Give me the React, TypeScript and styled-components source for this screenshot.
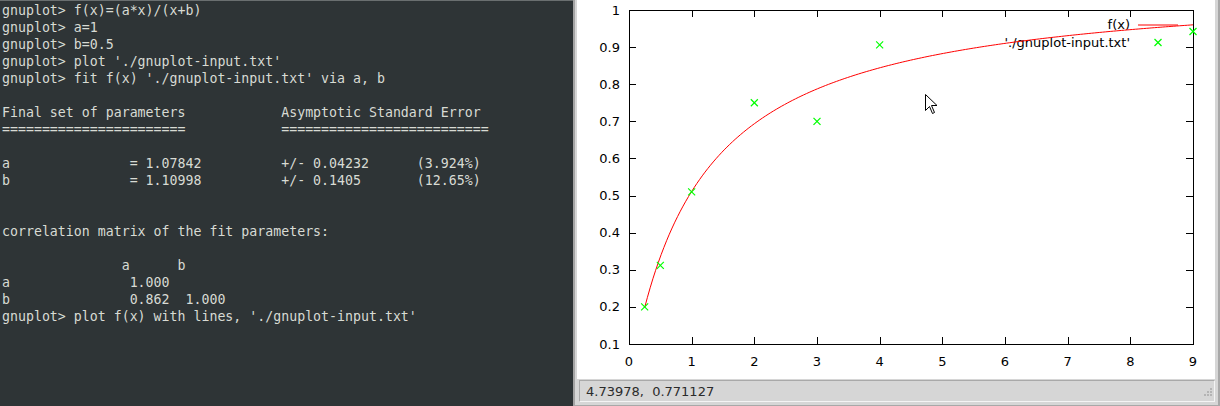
import React from 'react';
import styled, { createGlobalStyle } from 'styled-components';

const GlobalStyle = createGlobalStyle`
  html, body {
    margin: 0;
    padding: 0;
    overflow: hidden;
    background: #d6d6d6;
  }
`;

const terminalText = `gnuplot> f(x)=(a*x)/(x+b)
gnuplot> a=1
gnuplot> b=0.5
gnuplot> plot './gnuplot-input.txt'
gnuplot> fit f(x) './gnuplot-input.txt' via a, b

Final set of parameters            Asymptotic Standard Error
=======================            ==========================

a               = 1.07842          +/- 0.04232      (3.924%)
b               = 1.10998          +/- 0.1405       (12.65%)


correlation matrix of the fit parameters:

               a      b
a               1.000
b               0.862  1.000
gnuplot> plot f(x) with lines, './gnuplot-input.txt'`;

// plot geometry, in canvas coordinates
const W = 638;
const H = 379;
const X0 = 52;
const X1 = 616;
const Y0 = 344;
const Y1 = 10;
const xMin = 0;
const xMax = 9;
const yMin = 0.1;
const yMax = 1;

const px = (x: number) => X0 + ((x - xMin) / (xMax - xMin)) * (X1 - X0);
const py = (y: number) => Y0 - ((y - yMin) / (yMax - yMin)) * (Y0 - Y1);

const data: [number, number][] = [
  [0.25, 0.2],
  [0.5, 0.312],
  [1, 0.51],
  [2, 0.75],
  [3, 0.7],
  [4, 0.906],
  [9, 0.942],
];

const a = 1.07842;
const b = 1.10998;
const f = (x: number) => (a * x) / (x + b);

const curve = (() => {
  const pts: string[] = [];
  for (let i = 0; i <= 200; i++) {
    const x = 0.25 + ((9 - 0.25) * i) / 200;
    pts.push(`${px(x).toFixed(2)},${py(f(x)).toFixed(2)}`);
  }
  return 'M' + pts.join(' L');
})();

const xTicks = [0, 1, 2, 3, 4, 5, 6, 7, 8, 9];
const yTicks = [0.1, 0.2, 0.3, 0.4, 0.5, 0.6, 0.7, 0.8, 0.9, 1];
const TICK = 7;

const Cross: React.FC<{ x: number; y: number }> = ({ x, y }) => (
  <g stroke="#00ff00" strokeWidth={1.2}>
    <line x1={x - 3.5} y1={y - 3.5} x2={x + 3.5} y2={y + 3.5} />
    <line x1={x - 3.5} y1={y + 3.5} x2={x + 3.5} y2={y - 3.5} />
  </g>
);

const Plot: React.FC = () => (
  <svg width={W} height={H} viewBox={`0 0 ${W} ${H}`}>
    <g fill="#000" fontFamily="'DejaVu Sans', sans-serif" fontSize="13">
      {yTicks.map((t) => (
        <text key={t} x={X0 - 9} y={py(t) + 4.5} textAnchor="end">
          {t === 1 ? '1' : t.toFixed(1)}
        </text>
      ))}
      {xTicks.map((t) => (
        <text key={t} x={px(t)} y={Y0 + 22} textAnchor="middle">
          {t}
        </text>
      ))}
      <text x={553} y={29} textAnchor="end">f(x)</text>
      <text x={553} y={47} textAnchor="end">'./gnuplot-input.txt'</text>
    </g>
    <g stroke="#000" strokeWidth={1} shapeRendering="crispEdges">
      {yTicks.slice(1, -1).map((t) => (
        <g key={t}>
          <line x1={X0} y1={Math.round(py(t)) + 0.5} x2={X0 + TICK} y2={Math.round(py(t)) + 0.5} />
          <line x1={X1 - TICK} y1={Math.round(py(t)) + 0.5} x2={X1} y2={Math.round(py(t)) + 0.5} />
        </g>
      ))}
      {xTicks.slice(1, -1).map((t) => (
        <g key={t}>
          <line x1={Math.round(px(t)) + 0.5} y1={Y0} x2={Math.round(px(t)) + 0.5} y2={Y0 - TICK} />
          <line x1={Math.round(px(t)) + 0.5} y1={Y1} x2={Math.round(px(t)) + 0.5} y2={Y1 + TICK} />
        </g>
      ))}
      <rect x={X0 + 0.5} y={Y1 + 0.5} width={X1 - X0} height={Y0 - Y1} fill="none" />
    </g>
    <path d={curve} fill="none" stroke="#ff0000" strokeWidth={1} />
    <line x1={561} y1={25} x2={601} y2={25} stroke="#ff0000" strokeWidth={1} />
    {data.map(([x, y]) => (
      <Cross key={x} x={px(x)} y={py(y)} />
    ))}
    <Cross x={581} y={42.5} />
    <path
      d="M348.5,94.5 L348.5,110.5 L352.5,106.5 L355.5,113.5 L357.5,112.5 L354.5,105.5 L360,105.5 Z"
      fill="#fff"
      stroke="#000"
      strokeWidth={1}
      strokeLinejoin="round"
    />
  </svg>
);

const Grip: React.FC = () => (
  <svg width="12" height="12" viewBox="0 0 12 12">
    {[
      [10, 2],
      [10, 5],
      [7, 5],
      [10, 8],
      [7, 8],
      [4, 8],
    ].map(([x, y]) => (
      <rect key={`${x}-${y}`} x={x - 2} y={y + 1} width="2" height="2" fill="#b4b4b4" />
    ))}
  </svg>
);

const App: React.FC = () => (
  <>
    <GlobalStyle />
    <Screen>
      <Terminal>{terminalText}</Terminal>
      <PlotWindow>
        <Canvas>
          <Plot />
        </Canvas>
        <StatusRow>
          <StatusPanel>
            <StatusText>4.73978,&nbsp; 0.771127</StatusText>
            <Grip />
          </StatusPanel>
        </StatusRow>
      </PlotWindow>
    </Screen>
  </>
);

export default App;

const Screen = styled.div`
  display: flex;
  width: 1220px;
  height: 406px;
  overflow: hidden;
`;

const Terminal = styled.pre`
  margin: 0;
  width: 573px;
  flex: none;
  box-sizing: border-box;
  border-top: 1px solid #6a6f70;
  padding: 0.5px 2px 0;
  background: #2e3436;
  color: #d8dbd4;
  font-family: 'DejaVu Sans Mono', monospace;
  font-size: 13.25px;
  line-height: 17px;
  white-space: pre;
  overflow: hidden;
`;

const PlotWindow = styled.div`
  flex: 1;
  display: flex;
  flex-direction: column;
  box-sizing: border-box;
  background: #d6d6d6;
  border-left: 2px solid #a4a4a4;
  border-right: 2px solid #a8a8a8;
  border-bottom: 1px solid #a8a8a8;
  padding: 0 3px 3px 2px;
`;

const Canvas = styled.div`
  height: ${H}px;
  flex: none;
  background: #fff;
  line-height: 0;
`;

const StatusRow = styled.div`
  display: flex;
  padding: 1px 0 0 2px;
  height: 23px;
  box-sizing: border-box;
`;

const StatusPanel = styled.div`
  flex: 1;
  display: flex;
  align-items: center;
  justify-content: space-between;
  box-sizing: border-box;
  border-top: 1px solid #a9a9a9;
  border-left: 1px solid #a9a9a9;
  border-right: 1px solid #f4f4f4;
  border-bottom: 1px solid #f4f4f4;
  padding: 0 0 0 6px;
`;

const StatusText = styled.span`
  font-family: 'DejaVu Sans', sans-serif;
  font-size: 13px;
  color: #2b2b2b;
  white-space: pre;
`;
